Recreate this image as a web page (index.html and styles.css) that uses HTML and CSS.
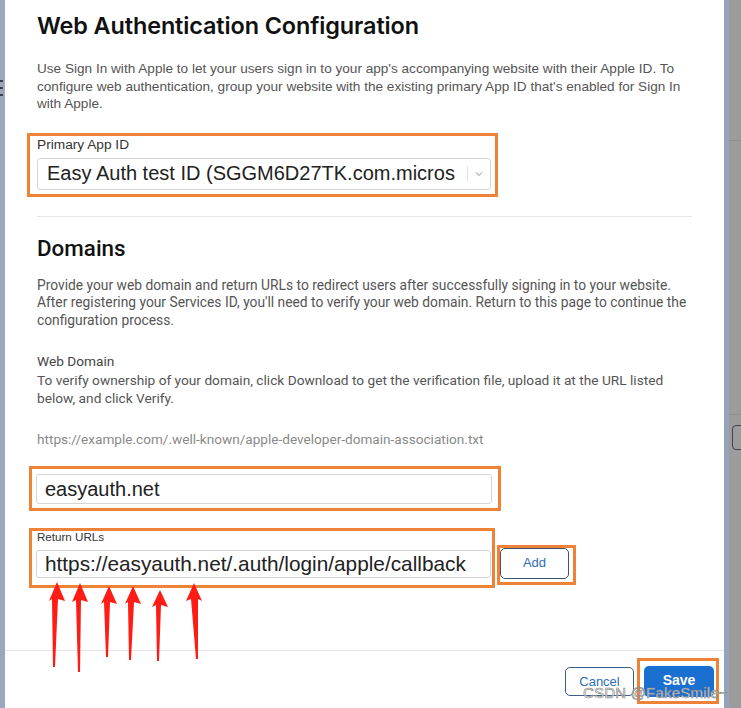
FILE: index.html
```html
<!DOCTYPE html>
<html>
<head>
<meta charset="utf-8">
<link rel="stylesheet" href="styles.css">
</head>
<body>
<div class="page">
  <div class="bg-left">
    <div class="ham"><span></span><span></span><span></span></div>
  </div>
  <div class="modal">
    <div class="content">
      <h1 class="title">Web Authentication Configuration</h1>
      <p class="intro">Use Sign In with Apple to let your users sign in to your app's accompanying website with their Apple ID. To<br>configure web authentication, group your website with the existing primary App ID that's enabled for Sign In<br>with Apple.</p>
      <div class="field">
        <div class="lbl">Primary App ID</div>
        <div class="select">
          <span class="select-text">Easy Auth test ID (SGGM6D27TK.com.micros</span>
          <span class="sep"></span>
          <svg class="chev" width="8" height="6" viewBox="0 0 8 6"><polyline points="1,1.5 4,4.5 7,1.5" fill="none" stroke="#888" stroke-width="1"/></svg>
        </div>
      </div>
      <div class="divider"></div>
      <section class="domains">
        <h2 class="h2">Domains</h2>
        <p class="dtext">Provide your web domain and return URLs to redirect users after successfully signing in to your website.<br>After registering your Services ID, you'll need to verify your web domain. Return to this page to continue the<br>configuration process.</p>
        <div class="sub">Web Domain</div>
        <p class="dtext2">To verify ownership of your domain, click Download to get the verification file, upload it at the URL listed<br>below, and click Verify.</p>
        <p class="url">https://example.com/.well-known/apple-developer-domain-association.txt</p>
        <div class="input input-domain">easyauth.net</div>
        <div class="lbl2">Return URLs</div>
        <div class="row">
          <div class="input input-url">https://easyauth.net/.auth/login/apple/callback</div>
          <button class="btn add">Add</button>
        </div>
      </section>
    </div>
    <div class="footer">
      <button class="btn cancel">Cancel</button>
      <button class="btn save">Save</button>
    </div>
  </div>
  <div class="bg-right">
    <div class="strip"></div>
    <div class="grey">
      <div class="gline l1"></div>
      <div class="gline l2"></div>
      <div class="gbox"></div>
    </div>
  </div>
  <svg class="annot" width="741" height="708" viewBox="0 0 741 708">
    <g fill="none" stroke="#ee8236" stroke-width="3">
      <rect x="28.5" y="134.5" width="468" height="61"/>
      <rect x="30.5" y="467.5" width="469" height="42"/>
      <rect x="30.5" y="529.5" width="463" height="57"/>
      <rect x="498.5" y="546.5" width="76" height="37"/>
      <rect x="638.5" y="659.5" width="79" height="43"/>
    </g>
    <g fill="#ff1c14">
      <polygon points="57,582 65,601 58,599 55,667 53,667 52,599 49,601"/>
      <polygon points="80,583 88,602 81,600 80,672 78,672 76,600 72,602"/>
      <polygon points="109,586 117,604 110,602 108,657 106,657 104,602 101,604"/>
      <polygon points="133,586 141,604 134,602 131,660 129,660 128,602 125,604"/>
      <polygon points="160,590 168,607 161,605 159,661 157,661 156,605 152,607"/>
      <polygon points="194,583 202,601 198,599 198,659 196,659 191,599 186,601"/>
    </g>
  </svg>
  <div class="watermark">CSDN @FakeSmile~</div>
</div>
</body>
</html>
```

FILE: styles.css
```css
* { box-sizing: border-box; }
html, body { margin: 0; padding: 0; }
body { width: 741px; height: 708px; overflow: hidden; background: #9b9b9b; }

.page {
  position: relative;
  display: flex;
  width: 741px;
  height: 708px;
}

.bg-left {
  width: 5px;
  background: #9ba7bd;
  flex: none;
}
.ham {
  display: flex;
  flex-direction: column;
  gap: 5px;
  padding-top: 80px;
}
.ham span {
  display: block;
  width: 3px;
  height: 2px;
  background: #3a3f4a;
}

.modal {
  width: 719px;
  flex: none;
  background: #fff;
  display: flex;
  flex-direction: column;
}

.content {
  flex: 1;
  padding: 12px 32px 0 32px;
  font-family: "Liberation Sans", Arial, sans-serif;
  color: #333;
}

.title {
  margin: 0;
  font-family: Inter, "Liberation Sans", sans-serif;
  font-weight: 600;
  font-size: 23.4px;
  line-height: 28px;
  color: #111;
  letter-spacing: -0.1px;
  white-space: nowrap;
}

.intro {
  margin: 20px 0 0 0;
  font-size: 13.6px;
  line-height: 17.5px;
  color: #555;
  white-space: nowrap;
}

.field { margin-top: 24px; }
.lbl {
  font-size: 13.7px;
  line-height: 16px;
  color: #333;
}
.select {
  margin-top: 5px;
  width: 454px;
  height: 32px;
  border: 1px solid #d6d6d6;
  border-radius: 3px;
  display: flex;
  align-items: center;
  padding-left: 9px;
}
.select-text {
  font-size: 20px;
  color: #222;
  white-space: nowrap;
  overflow: hidden;
  width: 420px;
}
.sep {
  width: 1px;
  height: 16px;
  background: #e3e3e3;
}
.chev { margin-left: 7px; }

.divider {
  margin-top: 26px;
  height: 1px;
  background: #e6e6e6;
}

.domains {
  font-family: Roboto, "Liberation Sans", sans-serif;
}
.h2 {
  margin: 17px 0 0 0;
  font-size: 22.4px;
  line-height: 28px;
  font-weight: 500;
  color: #111;
}
.dtext {
  margin: 15px 0 0 0;
  font-size: 13.8px;
  line-height: 17.5px;
  color: #555;
  white-space: nowrap;
}
.sub {
  margin-top: 23px;
  font-size: 13.7px;
  line-height: 18px;
  color: #444;
}
.dtext2 {
  margin: 1px 0 0 0;
  font-size: 13.7px;
  line-height: 18px;
  color: #555;
  white-space: nowrap;
}
.url {
  margin: 23px 0 0 0;
  font-size: 13.6px;
  line-height: 18px;
  color: #8a8a8a;
}

.input {
  font-family: "Liberation Sans", Arial, sans-serif;
  font-size: 20px;
  color: #222;
  border: 1px solid #d6d6d6;
  border-radius: 3px;
  display: flex;
  align-items: center;
  padding-left: 8px;
  white-space: nowrap;
}
.input-domain {
  margin-top: 26px;
  margin-left: -1px;
  width: 456px;
  height: 30px;
}
.lbl2 {
  margin-top: 25px;
  font-family: "Liberation Sans", Arial, sans-serif;
  font-size: 11.6px;
  line-height: 15px;
  color: #333;
}
.row {
  margin-top: 4px;
  display: flex;
  align-items: center;
  gap: 9px;
  margin-left: -1px;
}
.input-url {
  width: 455px;
  height: 28px;
  padding-left: 8px;
  font-size: 20.8px;
}

.btn {
  font-family: "Liberation Sans", Arial, sans-serif;
  background: #fff;
  border-radius: 5px;
  cursor: pointer;
  padding: 0;
}
.add {
  width: 69px;
  height: 31px;
  border: 1px solid #3d5470;
  color: #2f6db5;
  font-size: 13px;
  padding-bottom: 2px;
}

.footer {
  height: 58px;
  border-top: 1px solid #e6e6e6;
  display: flex;
  justify-content: flex-end;
  align-items: flex-start;
  gap: 10px;
  padding: 15px 10px 0 0;
}
.cancel {
  margin-top: 1px;
  width: 69px;
  height: 29px;
  border: 1px solid #3d5e88;
  color: #2f6db5;
  font-size: 13px;
}
.save {
  width: 70px;
  height: 31px;
  border: none;
  background: #1b6fd1;
  color: #fff;
  font-weight: bold;
  font-size: 14px;
  padding-bottom: 4px;
}

.bg-right {
  flex: 1;
  display: flex;
}
.strip {
  width: 5px;
  background: #96a4bb;
}
.grey {
  flex: 1;
  background: #9c9c9c;
}
.gline {
  height: 1px;
  background: #8e8e8e;
  margin-top: 140px;
}
.gline.l2 { margin-top: 273px; }
.gbox {
  margin-top: 10px;
  margin-left: 3px;
  width: 20px;
  height: 25px;
  border: 1px solid #3c4552;
  border-radius: 4px;
}

.annot {
  position: absolute;
  left: 0;
  top: 0;
  pointer-events: none;
}

.watermark {
  position: absolute;
  left: 583px;
  top: 684px;
  font-family: "Liberation Sans", Arial, sans-serif;
  font-size: 15px;
  color: rgba(255,255,255,0.85);
  -webkit-text-stroke: 0.6px #7d7d7d;
  white-space: nowrap;
  letter-spacing: 0.2px;
}
```
